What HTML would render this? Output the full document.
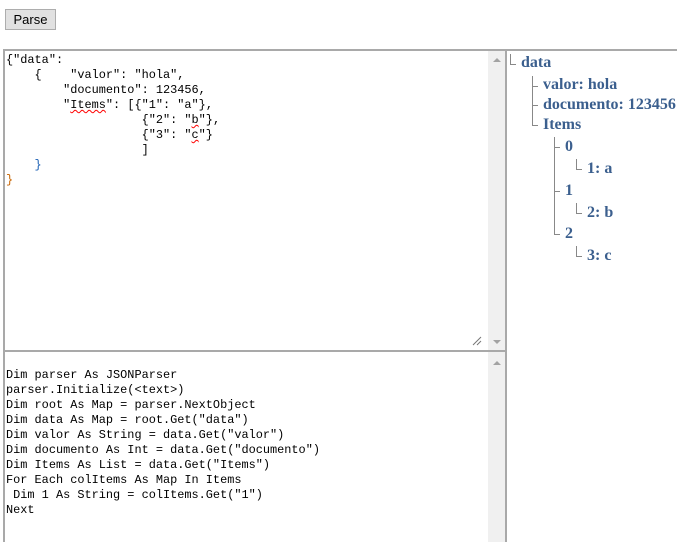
<!DOCTYPE html>
<html><head><style>
body{margin:0;width:677px;height:542px;background:#fff;position:relative;overflow:hidden;font-family:"Liberation Sans",sans-serif}
.btn{position:absolute;left:5px;top:9px;width:51px;height:21px;box-sizing:border-box;border:1px solid #adadad;background:#e1e1e1;font-size:13px;text-align:center;line-height:19px;color:#000}
.hl{position:absolute;background:#a9a9a9}
.sb{position:absolute;background:#f0f0f0}
pre{position:absolute;margin:0;font-family:"Liberation Mono",monospace;font-size:11.9px;line-height:15px;color:#000}
.up{position:absolute;width:0;height:0;border-left:4px solid transparent;border-right:4px solid transparent;border-bottom:4px solid #a3a3a3}
.dn{position:absolute;width:0;height:0;border-left:4px solid transparent;border-right:4px solid transparent;border-top:4px solid #a3a3a3}
.t{position:absolute;font-family:"Liberation Serif",serif;font-weight:bold;font-size:16px;color:#3b5f8e;line-height:16px;white-space:nowrap}
.v{position:absolute;width:1px;background:#888}
.h{position:absolute;height:1px;background:#888}
.sq{text-decoration:underline wavy red;text-decoration-thickness:1px}
</style></head><body>
<div class="btn">Parse</div>
<div class="hl" style="left:3px;top:49px;width:674px;height:2px"></div>
<div class="hl" style="left:3px;top:49px;width:2px;height:493px"></div>
<div class="hl" style="left:505px;top:49px;width:2px;height:493px"></div>
<div class="hl" style="left:3px;top:350px;width:504px;height:2px"></div>
<div class="sb" style="left:488px;top:51px;width:17px;height:299px"></div>
<div class="sb" style="left:488px;top:352px;width:17px;height:190px"></div>
<div class="up" style="left:493px;top:58px"></div>
<div class="dn" style="left:493px;top:340px"></div>
<div class="up" style="left:493px;top:361px"></div>
<svg style="position:absolute;left:472px;top:336px" width="10" height="10"><path d="M1 9L9 1M5 9L9 5" stroke="#777" stroke-width="1"/></svg>
<pre style="left:6px;top:53px">{"data":
    {    "valor": "hola",
        "documento": 123456,
        "<span class="sq">Items</span>": [{"1": "a"},
                   {"2": "<span class="sq">b</span>"},
                   {"3": "<span class="sq">c</span>"}
                   ]
    <span style="color:#1a5fb4">}</span>
<span style="color:#c86400">}</span></pre>
<pre style="left:6px;top:368px">Dim parser As JSONParser
parser.Initialize(&lt;text&gt;)
Dim root As Map = parser.NextObject
Dim data As Map = root.Get("data")
Dim valor As String = data.Get("valor")
Dim documento As Int = data.Get("documento")
Dim Items As List = data.Get("Items")
For Each colItems As Map In Items
 Dim 1 As String = colItems.Get("1")
Next</pre>
<div class="v" style="left:510px;top:54px;height:10px"></div><div class="h" style="left:510px;top:64px;width:6px"></div>
<div class="t" style="left:521px;top:55px">data</div>
<div class="v" style="left:532px;top:76px;height:49px"></div>
<div class="h" style="left:532px;top:86px;width:6px"></div><div class="t" style="left:543px;top:77px">valor: hola</div>
<div class="h" style="left:532px;top:105px;width:6px"></div><div class="t" style="left:543px;top:97px">documento: 123456</div>
<div class="h" style="left:532px;top:125px;width:6px"></div><div class="t" style="left:543px;top:117px">Items</div>
<div class="v" style="left:554px;top:137px;height:98px"></div>
<div class="h" style="left:554px;top:147px;width:6px"></div><div class="t" style="left:565px;top:139px">0</div>
<div class="h" style="left:554px;top:191px;width:6px"></div><div class="t" style="left:565px;top:183px">1</div>
<div class="h" style="left:554px;top:234px;width:6px"></div><div class="t" style="left:565px;top:226px">2</div>
<div class="v" style="left:576px;top:159px;height:10px"></div><div class="h" style="left:576px;top:169px;width:6px"></div><div class="t" style="left:587px;top:161px">1: a</div>
<div class="v" style="left:576px;top:203px;height:10px"></div><div class="h" style="left:576px;top:213px;width:6px"></div><div class="t" style="left:587px;top:205px">2: b</div>
<div class="v" style="left:576px;top:246px;height:10px"></div><div class="h" style="left:576px;top:256px;width:6px"></div><div class="t" style="left:587px;top:248px">3: c</div>
</body></html>
